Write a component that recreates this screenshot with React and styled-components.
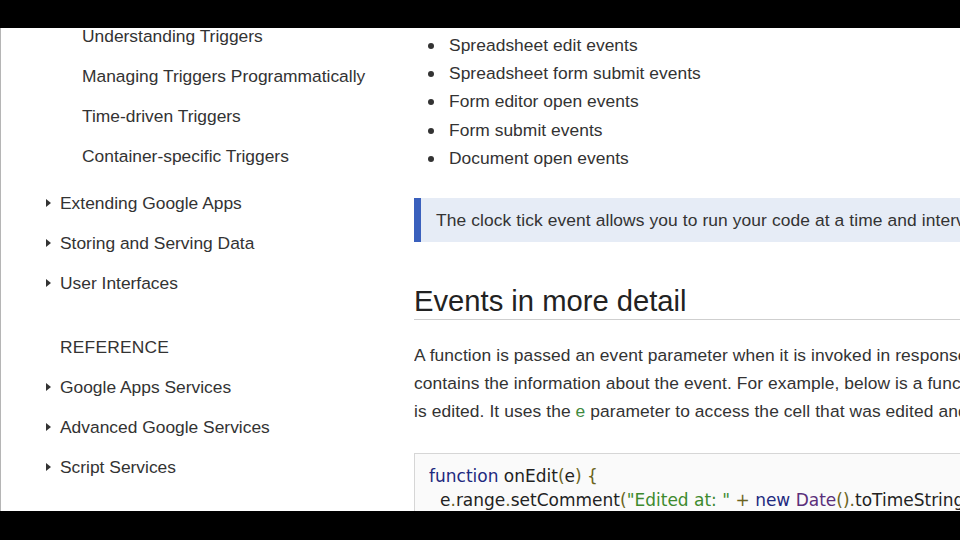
import React from 'react';
import styled, { createGlobalStyle } from 'styled-components';

const GlobalStyle = createGlobalStyle`
  html, body {
    margin: 0;
    padding: 0;
    background: #000;
  }
  body {
    font-family: "Liberation Sans", Arial, sans-serif;
  }
`;

const sideGroups = [
  { gap: 0, sub: true, items: ['Understanding Triggers', 'Managing Triggers Programmatically', 'Time-driven Triggers', 'Container-specific Triggers'] },
  { gap: 7, items: ['Extending Google Apps', 'Storing and Serving Data', 'User Interfaces'] },
  { gap: 24, heading: 'REFERENCE', items: ['Google Apps Services', 'Advanced Google Services', 'Script Services'] },
];

const events = [
  'Spreadsheet edit events',
  'Spreadsheet form submit events',
  'Form editor open events',
  'Form submit events',
  'Document open events',
];

function App() {
  return (
    <>
      <GlobalStyle />
      <Frame>
        <Screen>
          <Sidebar>
            {sideGroups.map((group, gi) => (
              <SideGroup key={gi} $gap={group.gap}>
                {group.heading && <SideHeading>{group.heading}</SideHeading>}
                {group.items.map((item) =>
                  group.sub ? (
                    <SubItem key={item}>{item}</SubItem>
                  ) : (
                    <NavItem key={item}>
                      <Arrow />
                      {item}
                    </NavItem>
                  )
                )}
              </SideGroup>
            ))}
          </Sidebar>

          <Content>
            <EventList>
              {events.map((ev) => (
                <EventItem key={ev}>
                  <Dot />
                  {ev}
                </EventItem>
              ))}
            </EventList>

            <Callout>
              The clock tick event allows you to run your code at a time and interval you choose.
            </Callout>

            <Heading>Events in more detail</Heading>

            <Paragraph>
              <Line>A function is passed an event parameter when it is invoked in response to an event. The event</Line>
              <Line>contains the information about the event. For example, below is a function that runs when a</Line>
              <Line>
                is edited. It uses the <Param>e</Param> parameter to access the cell that was edited and adds a comment.
              </Line>
            </Paragraph>

            <CodeBlock>
              <CodeLine>
                <Tok $k="kwd">function</Tok> onEdit<Tok $k="pun">(</Tok>e<Tok $k="pun">)</Tok> <Tok $k="pun">{'{'}</Tok>
              </CodeLine>
              <CodeLine $indent>
                e<Tok $k="pun">.</Tok>range<Tok $k="pun">.</Tok>setComment<Tok $k="pun">(</Tok>
                <Tok $k="str">"Edited at: "</Tok> <Tok $k="pun">+</Tok> <Tok $k="kwd">new</Tok> <Tok $k="typ">Date</Tok>
                <Tok $k="pun">().</Tok>toTimeString<Tok $k="pun">());</Tok>
              </CodeLine>
              <CodeLine>
                <Tok $k="pun">{'}'}</Tok>
              </CodeLine>
            </CodeBlock>
          </Content>
        </Screen>
      </Frame>
    </>
  );
}

const Frame = styled.div`
  width: 960px;
  height: 540px;
  box-sizing: border-box;
  padding: 28px 0 29px;
  background: #000;
  overflow: hidden;
`;

const Screen = styled.div`
  height: 100%;
  display: flex;
  background: #fff;
  border-left: 1px solid #b5b5b5;
  overflow: hidden;
  color: #333;
  font-size: 17.4px;
`;

const Sidebar = styled.nav`
  width: 413px;
  flex-shrink: 0;
  margin-top: -12px;
`;

const SideGroup = styled.div`
  margin-top: ${({ $gap }) => $gap}px;
`;

const SubItem = styled.div`
  height: 40px;
  line-height: 40px;
  padding-left: 81px;
  white-space: nowrap;
`;

const NavItem = styled.div`
  height: 40px;
  display: flex;
  align-items: center;
  padding-left: 45px;
  white-space: nowrap;
`;

const Arrow = styled.span`
  width: 0;
  height: 0;
  border-top: 4px solid transparent;
  border-bottom: 4px solid transparent;
  border-left: 5px solid #333;
  margin-right: 9px;
`;

const SideHeading = styled.div`
  height: 40px;
  line-height: 40px;
  padding-left: 59px;
  letter-spacing: 0.2px;
`;

const Content = styled.main`
  flex: 1;
  min-width: 0;
  overflow: hidden;
`;

const EventList = styled.ul`
  list-style: none;
  margin: 0;
  padding: 3px 0 0;
`;

const EventItem = styled.li`
  height: 28.3px;
  display: flex;
  align-items: center;
  white-space: nowrap;
  letter-spacing: 0.05px;
`;

const Dot = styled.span`
  width: 6px;
  height: 6px;
  border-radius: 50%;
  background: #333;
  margin: 1px 15px 0 14px;
`;

const Callout = styled.div`
  margin-top: 26px;
  height: 44px;
  display: flex;
  align-items: center;
  padding-left: 15px;
  background: #e6ecf6;
  border-left: 7px solid #3a60bd;
  white-space: nowrap;
  letter-spacing: 0.1px;
`;

const Heading = styled.h2`
  margin: 41px 0 0;
  font-size: 29.2px;
  font-weight: normal;
  line-height: 36px;
  color: #222;
  border-bottom: 1px solid #cfcfcf;
  white-space: nowrap;
`;

const Paragraph = styled.p`
  margin: 21px 0 0;
  line-height: 28px;
  letter-spacing: 0.09px;
`;

const Line = styled.span`
  display: block;
  white-space: nowrap;
`;

const Param = styled.code`
  font-family: inherit;
  color: #3f8a3f;
`;

const CodeBlock = styled.pre`
  margin: 28px 0 0;
  padding: 10px 14px;
  background: #fafafa;
  border: 1px solid #d6d6d6;
  border-right: none;
  font-family: "DejaVu Sans", Verdana, sans-serif;
  font-size: 17px;
  line-height: 24px;
  color: #222;
`;

const CodeLine = styled.div`
  white-space: nowrap;
  padding-left: ${({ $indent }) => ($indent ? '11px' : '0')};
`;

const tokColors = {
  kwd: '#1e2a80',
  pun: '#6b6320',
  str: '#3d8a2e',
  typ: '#5a2f7a',
};

const Tok = styled.span`
  color: ${({ $k }) => tokColors[$k]};
`;

export default App;
